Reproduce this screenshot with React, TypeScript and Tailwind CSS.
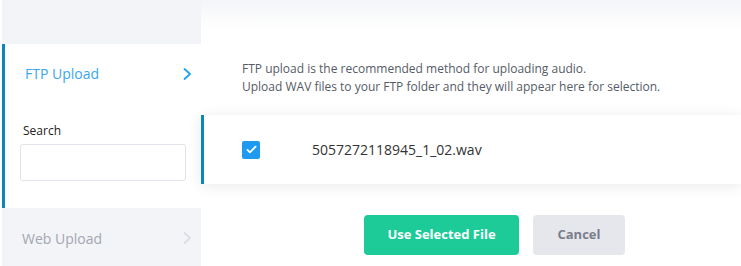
import React from 'react';

function Chevron({ className }: { className: string }) {
  return (
    <svg viewBox="0 0 9 12" className={`w-[9px] h-[12px] ${className}`}>
      <polyline points="1.5,1 7,6 1.5,11" fill="none" stroke="currentColor" strokeWidth="1.8" strokeLinecap="round" strokeLinejoin="round" />
    </svg>
  );
}

export default function App() {
  return (
    <div className="w-[741px] h-[266px] overflow-hidden bg-white flex pl-[2px] font-['Open_Sans',sans-serif]">
      {/* sidebar */}
      <aside className="w-[199px] shrink-0 bg-[#f3f4f8] flex flex-col">
        <div className="h-[44px]" />
        <div className="h-[164px] bg-white border-l-[3px] border-[#0a86b8] flex flex-col">
          <div className="flex items-center justify-between pl-[20px] pr-[9px] pt-[19px]">
            <span className="text-[14px] text-[#3aa7ee]">FTP Upload</span>
            <Chevron className="text-[#1ea3f0]" />
          </div>
          <div className="pl-[15px] mt-[39px]">
            <label className="block pl-[3px] text-[12px] text-[#222] leading-[16px]">Search</label>
            <input className="mt-[5px] w-[166px] h-[37px] border border-[#e2e3ea] rounded-[3px] bg-white outline-none" />
          </div>
        </div>
        <div className="flex-1 flex items-center justify-between pl-[20px] pr-[9px] pt-[2px]">
          <span className="text-[14px] text-[#a3a6b1]">Web Upload</span>
          <Chevron className="text-[#dcdde4]" />
        </div>
      </aside>

      {/* main */}
      <main className="flex-1 flex flex-col bg-gradient-to-b from-[#f4f5f8] to-white to-[30px]">
        <div className="pl-[41px] pt-[60px] text-[12px] leading-[18px] text-[#555b66]">
          <p>FTP upload is the recommended method for uploading audio.</p>
          <p>Upload WAV files to your FTP folder and they will appear here for selection.</p>
        </div>
        <div className="mt-[19px] h-[69px] bg-white border-l-[3px] border-[#0a86b8] shadow-[0_2px_14px_rgba(0,0,0,0.09)] flex items-center pl-[38px]">
          <span className="w-[18px] h-[18px] rounded-[2px] bg-[#1e9bf0] flex items-center justify-center">
            <svg viewBox="0 0 16 16" className="w-[13px] h-[13px]">
              <path d="M3 8.5l3 3 7-7" fill="none" stroke="white" strokeWidth="2.2" strokeLinecap="round" strokeLinejoin="round" />
            </svg>
          </span>
          <span className="ml-[52px] text-[14px] text-[#333]">5057272118945_1_02.wav</span>
        </div>
        <div className="mt-[31px] flex gap-[14px] pl-[163px]">
          <button className="w-[155px] h-[40px] rounded-[4px] bg-[#1ccb97] text-white text-[13px] font-bold">Use Selected File</button>
          <button className="w-[92px] h-[40px] rounded-[4px] bg-[#e6e7ec] text-[#7a7e8b] text-[13px] font-bold">Cancel</button>
        </div>
      </main>
    </div>
  );
}
